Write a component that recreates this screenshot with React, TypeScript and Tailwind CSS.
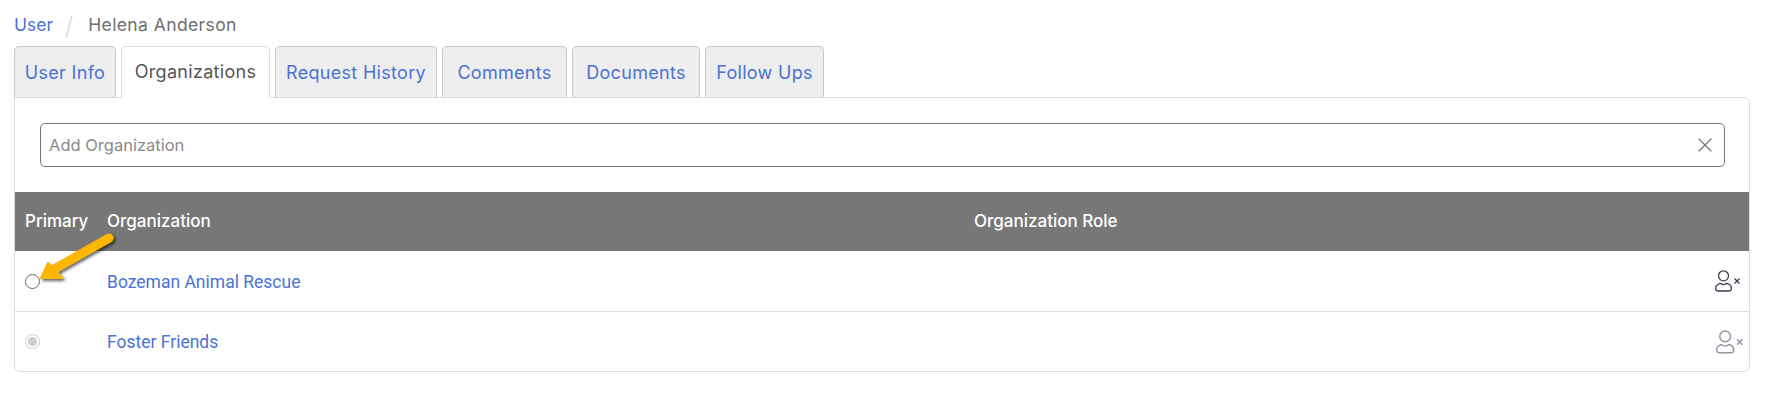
import { FC } from "react";
import { X } from "lucide-react";

const tabs = [
  { label: "User Info", width: "w-[102px]" },
  { label: "Organizations", width: "w-[149px]", active: true },
  { label: "Request History", width: "w-[162px]" },
  { label: "Comments", width: "w-[125px]" },
  { label: "Documents", width: "w-[128px]" },
  { label: "Follow Ups", width: "w-[119px]" },
];

const UserRemove: FC<{ className?: string; width: number; height: number }> = ({ className, width, height }) => (
  <svg width={width} height={height} viewBox="0 0 26 22" fill="none" stroke="currentColor" className={className}>
    <circle cx="8.500" cy="5.800" r="5" strokeWidth="1.300" />
    <path
      d="M3 21h11a2.500 2.500 0 0 0 2.500-2.500c0-2.500-2-4.500-4.500-5.200-1 .9-2.200 1.300-3.500 1.300s-2.500-.4-3.500-1.300C3 14 .6 16 .6 18.500A2.500 2.500 0 0 0 3 21z"
      strokeWidth="1.300"
    />
    <path d="M19.500 8.500l5 5M24.500 8.500l-5 5" strokeWidth="1.300" />
  </svg>
);

const Arrow: FC = () => (
  <svg width="100" height="60" viewBox="0 0 100 60" className="absolute left-[20px] top-[230px]">
    <defs>
      <filter id="arrowShadow" x="-20%" y="-20%" width="150%" height="150%">
        <feDropShadow dx="2" dy="2" stdDeviation="1.500" floodColor="#000" floodOpacity="0.6" />
      </filter>
    </defs>
    <g filter="url(#arrowShadow)" stroke="#fdb600" strokeLinejoin="round" strokeLinecap="round">
      <path d="M89 8 L36 38" fill="none" strokeWidth="9" />
      <path d="M28 33 L21 48 L42 48 Z" fill="#fdb600" strokeWidth="2" />
    </g>
  </svg>
);

export default function App() {
  return (
    <div className="relative w-[1768px] h-[406px] bg-white font-['Inter',sans-serif] overflow-hidden">
      <div className="flex items-center h-[46px] pl-[14px] pt-[5px] text-[17.500px]">
        <span className="text-[#4a72d4]">User</span>
        <span className="text-[#c8c8c8] ml-[12px] text-[24px] font-extralight leading-none">/</span>
        <span className="text-[#6e6e6e] ml-[15px] tracking-[0.4px]">Helena Anderson</span>
      </div>

      <div className="flex gap-[5px] pl-[14px] h-[52px] relative z-10">
        {tabs.map((tab) => (
          <div
            key={tab.label}
            className={
              tab.active
                ? `${tab.width} flex items-center justify-center pb-[2px] tracking-[0.3px] bg-white border border-[#dddddd] border-b-0 rounded-t-[5px] text-[#555555] text-[18px] h-[52px]`
                : `${tab.width} flex items-center justify-center tracking-[0.3px] bg-[#eeeeee] border border-[#c9c9c9] border-b-0 rounded-t-[5px] text-[#4a72d4] text-[18px] h-[51px]`
            }
          >
            {tab.label}
          </div>
        ))}
      </div>

      <div className="ml-[14px] w-[1736px] h-[275px] -mt-[1px] border border-[#dddddd] rounded-b-[6px] rounded-tr-[6px] flex flex-col">
        <div className="h-[94px] flex items-start pl-[25px] pr-[24px] pt-[25px]">
          <div className="w-full h-[44px] border border-[#777777] rounded-[5px] flex items-center justify-between pl-[8px] pr-[7px]">
            <span className="text-[16.500px] text-[#8a8a8a]">Add Organization</span>
            <X size={24} strokeWidth={1.200} className="text-[#777777]" />
          </div>
        </div>

        <div className="h-[59px] bg-[#777777] flex items-center text-white text-[17px] font-medium">
          <div className="w-[92px] pl-[10px]">Primary</div>
          <div className="w-[867px]">Organization</div>
          <div>Organization Role</div>
        </div>

        <div className="h-[61px] flex items-center border-b border-[#dddddd] font-['Roboto',sans-serif] text-[17.500px] text-[#4a72d4]">
          <div className="w-[92px] pl-[10px]">
            <div className="w-[15px] h-[15px] rounded-full border-[1.500px] border-[#666666]" />
          </div>
          <div className="flex-1 pt-[2px]">Bozeman Animal Rescue</div>
          <UserRemove width={26} height={22} className="text-[#37404f] mr-[8px]" />
        </div>

        <div className="flex-1 flex items-center font-['Roboto',sans-serif] text-[17.500px] text-[#4a72d4]">
          <div className="w-[92px] pl-[10px]">
            <div className="w-[15px] h-[15px] rounded-full border-[1.500px] border-[#cccccc] flex items-center justify-center">
              <div className="w-[9px] h-[9px] rounded-full bg-[#cccccc]" />
            </div>
          </div>
          <div className="flex-1 pt-[1px]">Foster Friends</div>
          <UserRemove width={28} height={24} className="text-[#8d94a0] mr-[5px]" />
        </div>
      </div>

      <Arrow />
    </div>
  );
}
